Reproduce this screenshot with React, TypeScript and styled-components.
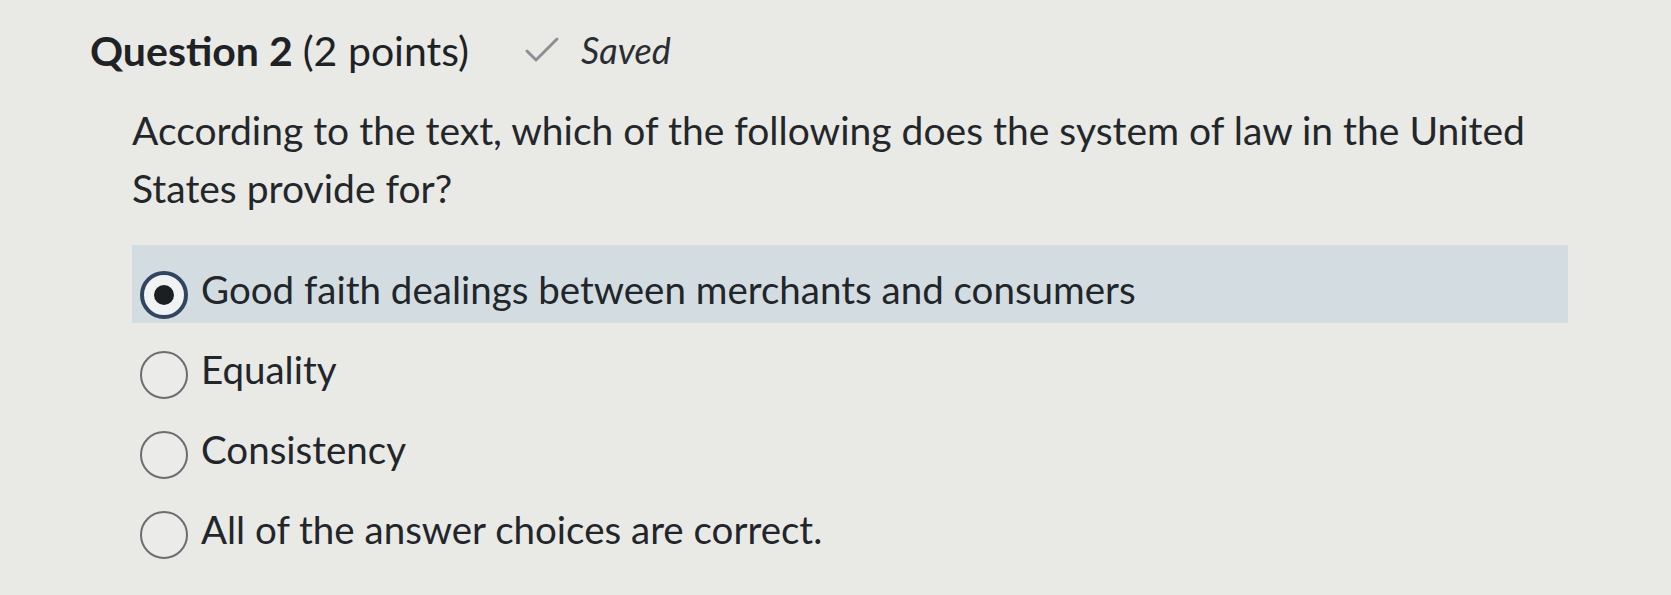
import React from "react";
import styled, { createGlobalStyle } from "styled-components";

const GlobalStyle = createGlobalStyle`
  html, body {
    margin: 0;
    padding: 0;
    background: #e9e9e6;
  }
  body {
    font-family: Lato, "Noto Sans", sans-serif;
    color: #25292c;
  }
`;

const Page = styled.div`
  width: 1671px;
  height: 595px;
  overflow: hidden;
  padding: 24px 0 0 90px;
  box-sizing: border-box;
`;

const Header = styled.div`
  display: flex;
  align-items: center;
  height: 52px;
`;

const Title = styled.h2`
  margin: 0;
  font-size: 41px;
  font-weight: 700;
  color: #1e2225;
`;

const Points = styled.span`
  font-weight: 400;
`;

const SavedBadge = styled.div`
  display: flex;
  align-items: center;
  gap: 20px;
  margin-left: 54px;
  font-size: 36px;
  font-style: italic;
  color: #2a2e31;
`;

const Body = styled.div`
  padding: 25px 0 0 42px;
  width: 1436px;
`;

const Prompt = styled.p`
  margin: 0 0 28px;
  font-size: 39px;
  line-height: 58px;
  color: #23272a;
`;

const Options = styled.div`
  display: flex;
  flex-direction: column;
  gap: 2px;
`;

const Option = styled.label<{ $selected?: boolean }>`
  display: flex;
  align-items: center;
  gap: 13px;
  height: 78px;
  box-sizing: border-box;
  padding: 22px 0 0 8px;
  background: ${(p) => (p.$selected ? "#d3dde1" : "transparent")};
  font-size: 38.5px;
  color: #22262a;
  cursor: pointer;
`;

const OptionText = styled.span`
  margin-bottom: 12px;
`;

const Radio = styled.span<{ $checked?: boolean }>`
  width: 48px;
  height: 48px;
  box-sizing: border-box;
  border-radius: 50%;
  border: ${(p) => (p.$checked ? "4px solid #2f4560" : "2px solid #6a6e71")};
  background: ${(p) => (p.$checked ? "#f0f2f3" : "#ebebe9")};
  display: flex;
  align-items: center;
  justify-content: center;
  flex-shrink: 0;

  &::after {
    content: "";
    display: ${(p) => (p.$checked ? "block" : "none")};
    width: 20px;
    height: 20px;
    border-radius: 50%;
    background: #1c1f22;
  }
`;

const CheckIcon = () => (
  <svg width="38" height="30" viewBox="0 0 38 30" fill="none">
    <path
      d="M4 16 L13 25 L34 4"
      stroke="#8c9093"
      strokeWidth="3"
      strokeLinecap="round"
      strokeLinejoin="round"
    />
  </svg>
);

const choices = [
  "Good faith dealings between merchants and consumers",
  "Equality",
  "Consistency",
  "All of the answer choices are correct.",
];

export default function App() {
  const selected = 0;
  return (
    <>
      <GlobalStyle />
      <Page>
        <Header>
          <Title>
            Question 2 <Points>(2 points)</Points>
          </Title>
          <SavedBadge>
            <CheckIcon />
            Saved
          </SavedBadge>
        </Header>
        <Body>
          <Prompt>
            According to the text, which of the following does the system of law in the United
            States provide for?
          </Prompt>
          <Options>
            {choices.map((c, i) => (
              <Option key={c} $selected={i === selected}>
                <Radio $checked={i === selected} />
                <OptionText>{c}</OptionText>
              </Option>
            ))}
          </Options>
        </Body>
      </Page>
    </>
  );
}
